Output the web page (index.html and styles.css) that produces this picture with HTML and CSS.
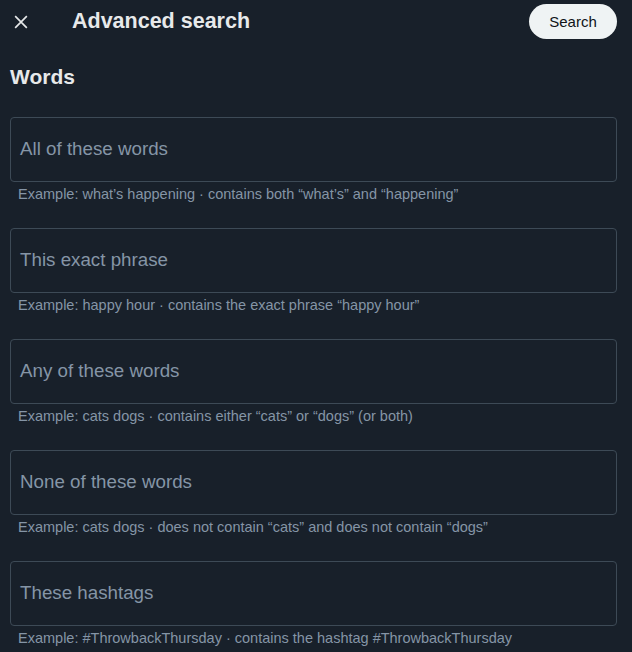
FILE: index.html
```html
<!DOCTYPE html>
<html lang="en">

<head>
  <meta charset="UTF-8">
  <meta name="viewport" content="width=device-width, initial-scale=1.0">
  <title>Advanced search</title>
  <link rel="stylesheet" href="styles.css">
</head>

<body>
  <header class="top-bar">
    <button class="close-btn" aria-label="Close">
      <svg viewBox="0 0 24 24" width="20" height="20">
        <path d="M5 5 L19 19 M19 5 L5 19" stroke="#e7e9ea" stroke-width="2" fill="none" />
      </svg>
    </button>
    <h1 class="title">Advanced search</h1>
    <button class="search-btn">Search</button>
  </header>

  <main class="content">
    <h2 class="section-title">Words</h2>

    <div class="field">
      <div class="input-box">All of these words</div>
      <p class="hint">Example: what’s happening · contains both “what’s” and “happening”</p>
    </div>

    <div class="field">
      <div class="input-box">This exact phrase</div>
      <p class="hint">Example: happy hour · contains the exact phrase “happy hour”</p>
    </div>

    <div class="field">
      <div class="input-box">Any of these words</div>
      <p class="hint">Example: cats dogs · contains either “cats” or “dogs” (or both)</p>
    </div>

    <div class="field">
      <div class="input-box">None of these words</div>
      <p class="hint">Example: cats dogs · does not contain “cats” and does not contain “dogs”</p>
    </div>

    <div class="field">
      <div class="input-box">These hashtags</div>
      <p class="hint">Example: #ThrowbackThursday · contains the hashtag #ThrowbackThursday</p>
    </div>
  </main>
</body>

</html>
```

FILE: styles.css
```css
body {
  background-color: #18202a;
  font-family: "Liberation Sans", Arial, sans-serif;
  color: #e7e9ea;
  margin: 0;
  padding: 0;
  overflow: hidden;
}

.top-bar {
  display: flex;
  align-items: center;
  height: 43px;
  padding: 0 15px 0 10px;
}

.close-btn {
  background: none;
  border: none;
  padding: 0;
  width: 22px;
  height: 22px;
  display: flex;
  align-items: center;
  justify-content: center;
  margin-right: 40px;
}

.title {
  flex-grow: 1;
  margin: 0;
  font-size: 21.5px;
  font-weight: bold;
}

.search-btn {
  background-color: #eff3f4;
  color: #0f1419;
  border: none;
  border-radius: 18px;
  height: 35px;
  width: 88px;
  font-family: inherit;
  font-size: 15px;
}

.content {
  padding: 0 15px 0 10px;
}

.section-title {
  margin: 22px 0 28px;
  font-size: 21px;
  line-height: 24px;
  font-weight: bold;
}

.field {
  margin-bottom: 24px;
}

.input-box {
  box-sizing: border-box;
  height: 65px;
  border: 1px solid #3d4a56;
  border-radius: 4px;
  display: flex;
  align-items: center;
  padding: 0 0 2px 9px;
  font-size: 18.75px;
  color: #8595a6;
}

.hint {
  margin: 3px 0 0 8px;
  font-size: 14.5px;
  line-height: 19px;
  color: #8595a6;
}
```
